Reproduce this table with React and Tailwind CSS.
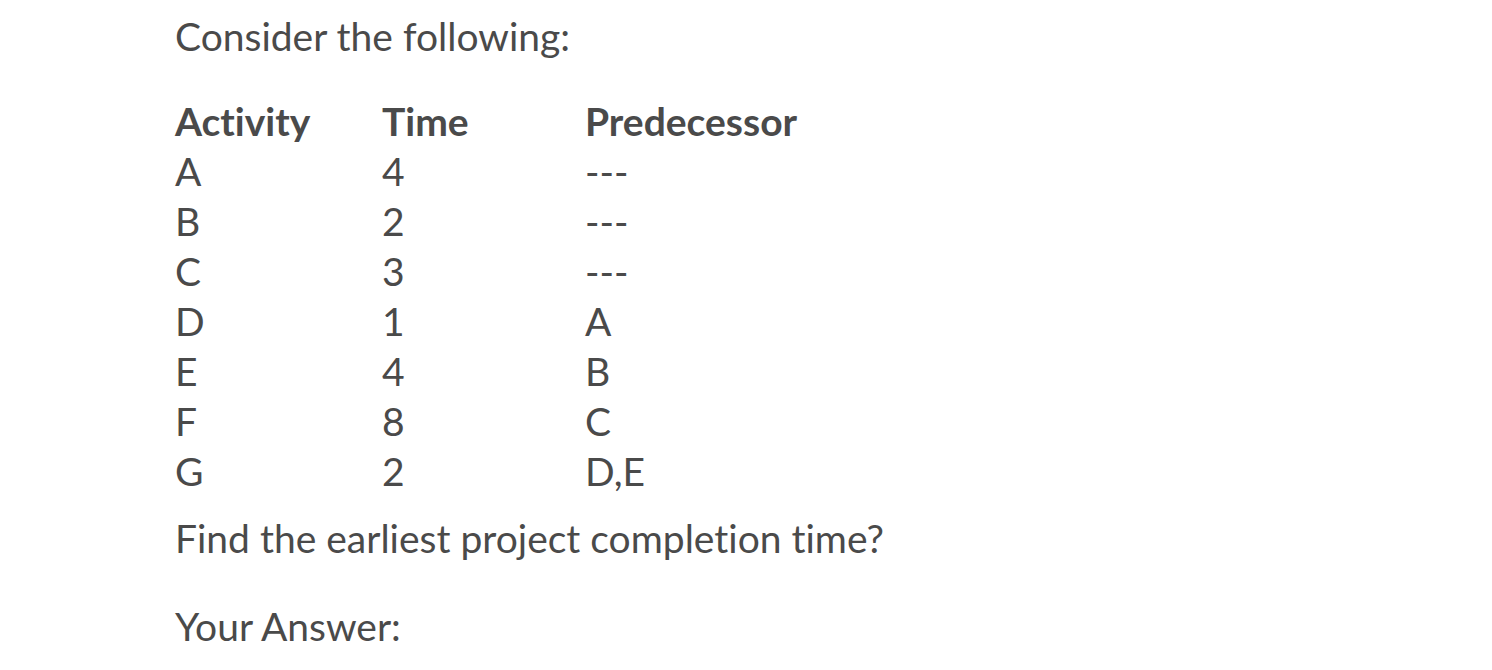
export default function App() {
  const rows = [
    ["A", "4", "---"],
    ["B", "2", "---"],
    ["C", "3", "---"],
    ["D", "1", "A"],
    ["E", "4", "B"],
    ["F", "8", "C"],
    ["G", "2", "D,E"],
  ];
  return (
    <div className="w-[1492px] h-[670px] bg-white text-[#4a4a4a] text-[39px] leading-[50px] pl-[175px] pt-[11px] [font-variant-ligatures:none]" style={{ fontFamily: "Lato, 'Open Sans', sans-serif" }}>
      <div>Consider the following:</div>
      <div className="mt-[35px] grid grid-cols-[207px_203px_300px]">
        <div className="font-bold">Activity</div>
        <div className="font-bold">Time</div>
        <div className="font-bold">Predecessor</div>
        {rows.map((r) => [
          <div key={r[0] + "a"}>{r[0]}</div>,
          <div key={r[0] + "b"}>{r[1]}</div>,
          <div key={r[0] + "c"}>{r[2]}</div>,
        ])}
      </div>
      <div className="mt-[17px]">Find the earliest project completion time?</div>
      <div className="mt-[38px]">Your Answer:</div>
    </div>
  );
}
